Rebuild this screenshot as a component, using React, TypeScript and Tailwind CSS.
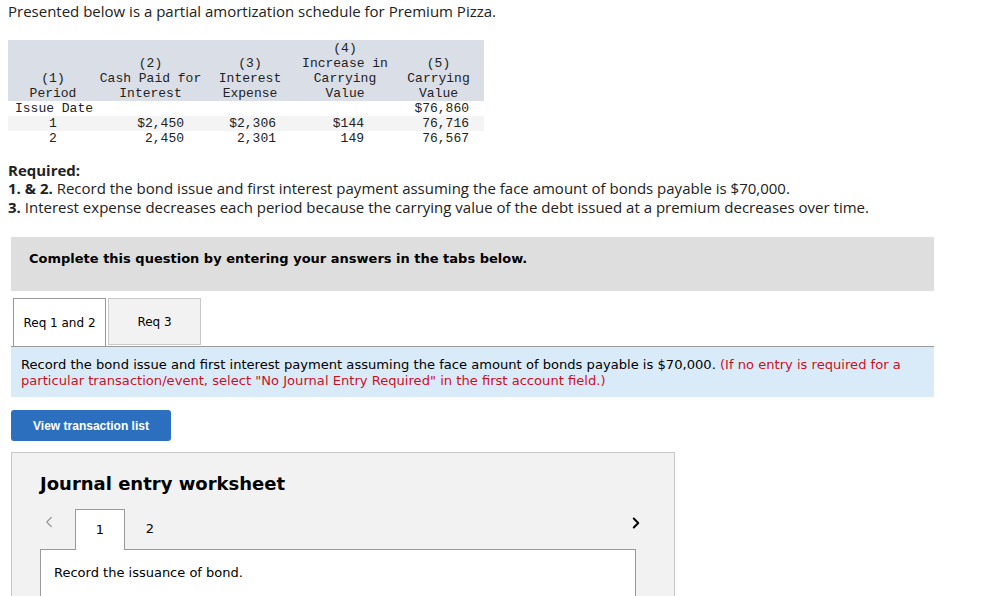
import { ChevronLeft, ChevronRight } from 'lucide-react'

const rows = [
  { period: 'Issue Date', cash: '', interest: '', increase: '', carrying: '$76,860', shade: false },
  { period: '1', cash: '$2,450', interest: '$2,306', increase: '$144', carrying: '76,716', shade: true },
  { period: '2', cash: '2,450', interest: '2,301', increase: '149', carrying: '76,567', shade: false },
]

function ScheduleTable() {
  return (
    <div className="mt-[19px] w-[476px] font-['Liberation_Mono',monospace] text-[13px] leading-[15px] text-[#222]">
      {/* header */}
      <div className="grid grid-cols-[90px_105px_94px_96px_91px] bg-[#dadee7] pt-[1px]">
        <div className="flex flex-col items-center justify-end">
          <span>(1)</span>
          <span>Period</span>
        </div>
        <div className="flex flex-col items-center justify-end">
          <span>(2)</span>
          <span>Cash Paid for</span>
          <span>Interest</span>
        </div>
        <div className="flex flex-col items-center justify-end">
          <span>(3)</span>
          <span>Interest</span>
          <span>Expense</span>
        </div>
        <div className="flex flex-col items-center justify-end">
          <span>(4)</span>
          <span>Increase in</span>
          <span>Carrying</span>
          <span>Value</span>
        </div>
        <div className="flex flex-col items-center justify-end">
          <span>(5)</span>
          <span>Carrying</span>
          <span>Value</span>
        </div>
      </div>
      {rows.map((r) => (
        <div
          key={r.period}
          className={`grid grid-cols-[90px_105px_94px_96px_91px] ${r.shade ? 'bg-[#f4f4f4]' : ''}`}
        >
          <div className={r.period === 'Issue Date' ? 'pl-[7px]' : 'text-center'}>{r.period}</div>
          <div className="pr-[19px] text-right">{r.cash}</div>
          <div className="pr-[21px] text-right">{r.interest}</div>
          <div className="pr-[29px] text-right">{r.increase}</div>
          <div className="pr-[15px] text-right">{r.carrying}</div>
        </div>
      ))}
    </div>
  )
}

export default function App() {
  return (
    <div className="min-h-screen w-[987px] bg-white text-[#222]">
      <div className="px-[8px] pt-[2px] font-['Open_Sans',sans-serif] text-[15px] leading-[19px] text-[#222]">
        <p>Presented below is a partial amortization schedule for Premium Pizza.</p>
        <ScheduleTable />
        <div className="mt-[15px] leading-[18px]">
          <p className="font-bold">Required:</p>
          <p>
            <span className="font-bold">1. &amp; 2.</span> Record the bond issue and first interest payment assuming
            the face amount of bonds payable is $70,000.
          </p>
          <p className="mt-px">
            <span className="font-bold">3.</span> Interest expense decreases each period because the carrying value
            of the debt issued at a premium decreases over time.
          </p>
        </div>
      </div>

      <div className="ml-[11px] w-[923px] font-['DejaVu_Sans',Verdana,sans-serif]">
        <div className="mt-[21px] h-[54px] bg-[#dedede] px-[18px] pt-[12px] text-[13px] font-bold leading-[20px] text-black">
          Complete this question by entering your answers in the tabs below.
        </div>

        {/* tabs */}
        <div className="mt-[7px] flex gap-[2px] pl-[2px]">
          <div className="flex h-[48px] w-[93px] items-center justify-center border border-b-0 border-[#999] bg-white text-[12px] text-black">
            Req 1 and 2
          </div>
          <div className="mb-[1px] flex h-[47px] w-[93px] items-center justify-center border border-[#c8c8c8] bg-[#f2f2f2] text-[12px] text-black">
            Req 3
          </div>
        </div>
        <div className="border-t border-[#9a9a9a] bg-[#d9ebf9] px-[10px] pb-[8px] pt-[10px] text-[13.1px] leading-[16px] text-black">
          Record the bond issue and first interest payment assuming the face amount of bonds payable is $70,000.{' '}
          <span className="text-[#cc0f1f]">
            (If no entry is required for a particular transaction/event, select "No Journal Entry Required" in the
            first account field.)
          </span>
        </div>

        <button className="mt-[13px] flex h-[31px] w-[160px] items-center justify-center rounded-[3px] bg-[#2c6fbe] font-['Liberation_Sans',Arial,sans-serif] text-[12px] font-bold text-white">
          View transaction list
        </button>

        {/* worksheet */}
        <div className="mt-[11px] h-[200px] w-[664px] border border-[#c8c8c8] bg-[#f2f2f2] pl-[28px] pr-[38px] pt-[17px]">
          <h2 className="text-[18px] font-bold leading-[27px] text-black">Journal entry worksheet</h2>
          <div className="mt-[11px] flex items-end">
            <ChevronLeft className="mb-[18px] h-[18px] w-[18px] text-[#999]" strokeWidth={1.6} />
            <div className="relative z-10 -mb-px ml-[17px] flex h-[41px] w-[50px] items-center justify-center border border-b-0 border-[#999] bg-white text-[13px] text-black">
              1
            </div>
            <div className="flex h-[41px] w-[50px] items-center justify-center text-[13px] text-black">2</div>
            <ChevronRight
              className="-mr-[9px] mb-[17px] ml-auto h-[18px] w-[18px] text-black"
              strokeWidth={2.6}
            />
          </div>
          <div className="h-[60px] border border-[#999] bg-white px-[13px] pt-[13px] text-[13px] text-black">
            Record the issuance of bond.
          </div>
        </div>
      </div>
    </div>
  )
}
